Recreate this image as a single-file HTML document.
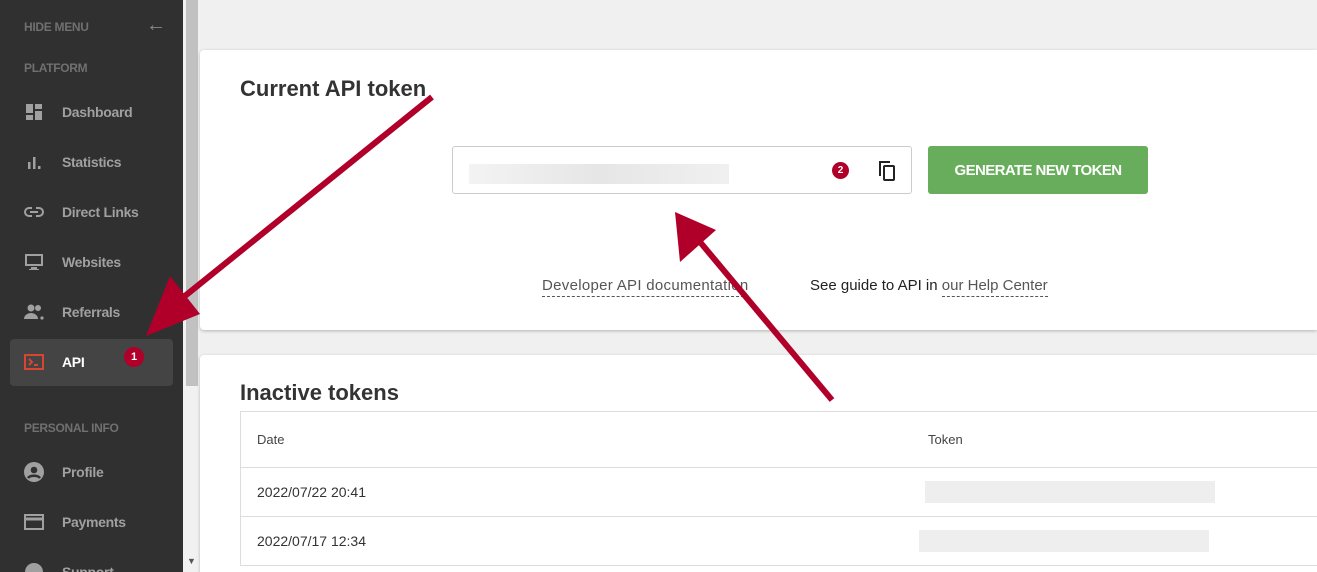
<!DOCTYPE html><html><head><style>
html,body{margin:0;width:1317px;height:572px;overflow:hidden}
body{background:#f0f0f0;font-family:"Liberation Sans",Arial,sans-serif;position:relative}
.sb{position:absolute;left:0;top:0;width:183px;height:572px;background:#303030;overflow:hidden}
.scr{position:absolute;left:183px;top:0;width:17px;height:572px;background:#f1f1f1}
.thumb{position:absolute;left:186px;top:0;width:12px;height:386px;background:#c1c1c1}
.hd{position:absolute;left:24px;font-size:12px;font-weight:bold;color:#707070;letter-spacing:-0.3px}
.it{position:absolute;left:24px;font-size:14px;font-weight:bold;color:#a0a0a0;display:flex;align-items:center;letter-spacing:-0.3px}
.ic{width:20px;height:20px;margin-right:18px;display:inline-flex;align-items:center;justify-content:center}
.card{position:absolute;left:200px;right:0;background:#fff;box-shadow:0 1px 3px rgba(0,0,0,.25);border-radius:4px 0 0 4px}
h2{position:absolute;margin:0;font-size:22px;font-weight:bold;color:#333}
.badge{position:absolute;width:20px;height:20px;border-radius:50%;background:#b0002a;color:#fff;font-size:11px;font-weight:bold;display:flex;align-items:center;justify-content:center}
td{border-top:1px solid #ddd;font-size:14px;color:#333;padding:0}
</style></head><body>
<div class="sb">
<div class="hd" style="top:20px">HIDE MENU</div>
<div style="position:absolute;left:146px;top:14px;color:#888;font-size:20px">&#8592;</div>
<div class="hd" style="top:61px">PLATFORM</div>
<div class="it" style="top:102px"><span class="ic"><svg width="18" height="18" viewBox="0 0 18 18" fill="#a0a0a0"><rect x="1" y="1" width="7" height="9"/><rect x="10" y="1" width="7" height="5"/><rect x="1" y="12" width="7" height="5"/><rect x="10" y="8" width="7" height="9"/></svg></span>Dashboard</div>
<div class="it" style="top:152px"><span class="ic"><svg width="18" height="18" viewBox="0 0 18 18" fill="#a0a0a0"><rect x="3" y="9" width="2.5" height="7"/><rect x="8" y="4" width="2.5" height="12"/><rect x="13" y="13" width="2.5" height="3"/></svg></span>Statistics</div>
<div class="it" style="top:202px"><span class="ic"><svg width="20" height="12" viewBox="0 0 20 12" fill="none" stroke="#a0a0a0" stroke-width="2"><path d="M8 2H5a4 4 0 000 8h3M12 2h3a4 4 0 010 8h-3M6 6h8"/></svg></span>Direct Links</div>
<div class="it" style="top:252px"><span class="ic"><svg width="20" height="18" viewBox="0 0 20 18" fill="#a0a0a0"><path d="M1 1h18v12H1zM3 3v8h14V3zM7 14h6v2h2v1H5v-1h2z"/></svg></span>Websites</div>
<div class="it" style="top:302px"><span class="ic"><svg width="20" height="16" viewBox="0 0 20 16" fill="#a0a0a0"><circle cx="7" cy="4" r="3.5"/><path d="M0 15c0-4 4-6 7-6s7 2 7 6z"/><circle cx="14" cy="4" r="3"/><circle cx="18" cy="14" r="1.6"/></svg></span>Referrals</div>
<div style="position:absolute;left:10px;top:339px;width:163px;height:47px;background:#444;border-radius:4px"></div>
<div class="it" style="top:352px;color:#fff"><span class="ic"><svg width="20" height="16" viewBox="0 0 20 16" fill="none" stroke="#d9452e" stroke-width="2"><rect x="1" y="1" width="18" height="14"/><path d="M5 5l3 3-3 3M10 11h4"/></svg></span>API</div>
<div class="badge" style="left:124px;top:347px">1</div>
<div class="hd" style="top:421px">PERSONAL INFO</div>
<div class="it" style="top:462px"><span class="ic"><svg width="20" height="20" viewBox="0 0 20 20"><circle cx="10" cy="10" r="10" fill="#a0a0a0"/><circle cx="10" cy="8" r="3.3" fill="#303030"/><path d="M4 16c2-3 10-3 12 0" stroke="#303030" stroke-width="2.5" fill="none"/></svg></span>Profile</div>
<div class="it" style="top:512px"><span class="ic"><svg width="20" height="16" viewBox="0 0 20 16" fill="none" stroke="#a0a0a0" stroke-width="2"><rect x="1" y="1" width="18" height="14"/><path d="M1 5h18" stroke-width="3"/></svg></span>Payments</div>
<div class="it" style="top:562px"><span class="ic"><svg width="20" height="20"><circle cx="10" cy="10" r="9" fill="#a0a0a0"/></svg></span>Support</div>
</div>
<div class="scr"></div><div class="thumb"></div>
<div style="position:absolute;left:187px;top:556px;font-size:9px;color:#555">&#9660;</div>
<div class="card" style="top:50px;height:280px">
<h2 style="left:40px;top:26px">Current API token</h2>
<div style="position:absolute;left:252px;top:96px;width:458px;height:46px;border:1px solid #ccc;border-radius:3px">
<div style="position:absolute;left:16px;top:17px;width:260px;height:20px;background:linear-gradient(90deg,#f3f3f3,#e6e6e6,#f0f0f0)"></div>
<div class="badge" style="left:379px;top:15px;width:17px;height:17px;font-size:10px">2</div>
<svg style="position:absolute;left:424px;top:13px" width="20" height="22" viewBox="0 0 20 22" fill="none" stroke="#222" stroke-width="2"><path d="M3 16V2h10"/><rect x="7" y="6" width="10" height="14" rx="1"/></svg>
</div>
<div style="position:absolute;left:728px;top:96px;width:220px;height:48px;background:#68ad5c;border-radius:3px;color:#fff;font-weight:bold;font-size:15px;letter-spacing:-0.6px;display:flex;align-items:center;justify-content:center">GENERATE NEW TOKEN</div>
<div style="position:absolute;left:342px;top:227px;font-size:15px;color:#555;border-bottom:1px dashed #555;padding-bottom:2px;letter-spacing:0.3px">Developer API documentation</div>
<div style="position:absolute;left:610px;top:227px;font-size:15px;color:#222">See guide to API in <span style="color:#555;border-bottom:1px dashed #555;padding-bottom:2px">our Help Center</span></div>
</div>
<div class="card" style="top:355px;height:230px">
<h2 style="left:40px;top:25px">Inactive tokens</h2>
<table style="position:absolute;left:40px;top:56px;width:1100px;border:1px solid #ddd;border-collapse:collapse">
<tr style="height:56px"><td style="padding-left:16px;width:671px;font-size:13px;color:#444;border:0">Date</td><td style="font-size:13px;color:#444;border:0">Token</td></tr>
<tr style="height:49px"><td style="padding-left:16px">2022/07/22 20:41</td><td><div style="width:290px;height:22px;background:#eee;margin-left:-3px"></div></td></tr>
<tr style="height:49px"><td style="padding-left:16px">2022/07/17 12:34</td><td><div style="width:290px;height:22px;background:#eee;margin-left:-9px"></div></td></tr>
</table>
</div>
<svg style="position:absolute;left:0;top:0" width="1317" height="572">
<path d="M432 97L170 308" stroke="#b0002a" stroke-width="6"/><polygon points="146,336 170,276 200,314" fill="#b0002a"/>
<path d="M832 400L695 236" stroke="#b0002a" stroke-width="6"/><polygon points="675,212 680,262 716,230" fill="#b0002a"/>
</svg>
</body></html>
